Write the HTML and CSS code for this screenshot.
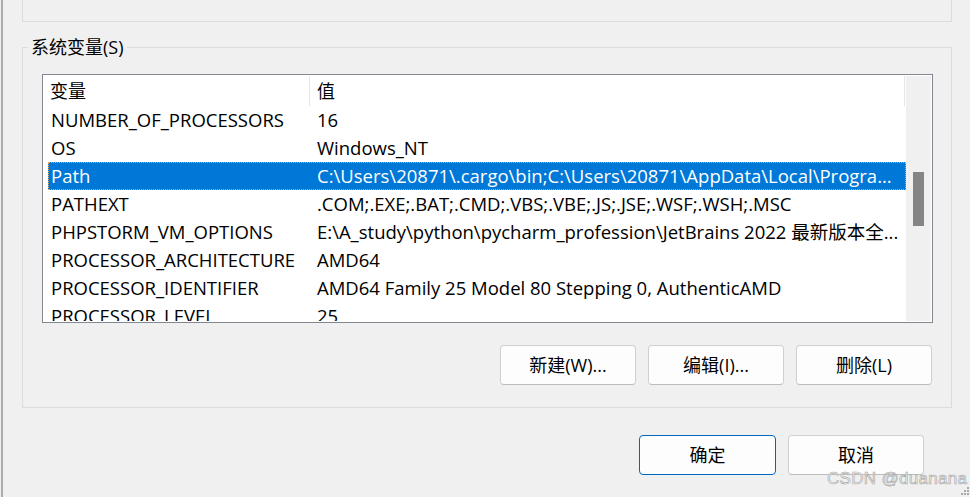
FILE: index.html
```html
<!DOCTYPE html>
<html lang="zh-CN">
<head>
<meta charset="utf-8">
<title>环境变量</title>
<link rel="stylesheet" href="styles.css">
</head>
<body>
<div class="window">
  <div class="group-top"></div>
  <fieldset class="group-sys">
    <legend class="group-label">系统变量(S)</legend>
    <div class="group-body">
      <div class="listbox">
        <div class="listview">
          <div class="header">
            <div class="hcell c1">变量</div>
            <div class="hcell c2">值</div>
          </div>
          <div class="row"><span class="cell c1">NUMBER_OF_PROCESSORS</span><span class="cell c2">16</span></div>
          <div class="row"><span class="cell c1">OS</span><span class="cell c2">Windows_NT</span></div>
          <div class="row selected"><span class="cell c1">Path</span><span class="cell c2">C:\Users\20871\.cargo\bin;C:\Users\20871\AppData\Local\Progra...</span></div>
          <div class="row"><span class="cell c1">PATHEXT</span><span class="cell c2">.COM;.EXE;.BAT;.CMD;.VBS;.VBE;.JS;.JSE;.WSF;.WSH;.MSC</span></div>
          <div class="row"><span class="cell c1">PHPSTORM_VM_OPTIONS</span><span class="cell c2">E:\A_study\python\pycharm_profession\JetBrains 2022 最新版本全...</span></div>
          <div class="row"><span class="cell c1">PROCESSOR_ARCHITECTURE</span><span class="cell c2">AMD64</span></div>
          <div class="row"><span class="cell c1">PROCESSOR_IDENTIFIER</span><span class="cell c2">AMD64 Family 25 Model 80 Stepping 0, AuthenticAMD</span></div>
          <div class="row"><span class="cell c1">PROCESSOR_LEVEL</span><span class="cell c2">25</span></div>
        </div>
        <div class="scrollbar"><div class="thumb"></div></div>
      </div>
      <div class="btn-row">
        <button class="btn">新建(W)...</button>
        <button class="btn">编辑(I)...</button>
        <button class="btn">删除(L)</button>
      </div>
    </div>
  </fieldset>
  <div class="dialog-actions">
    <button class="btn btn-default">确定</button>
    <button class="btn">取消</button>
  </div>
</div>
<div class="watermark">CSDN @duanana</div>
<svg class="grip" width="12" height="10" viewBox="0 0 12 10">
  <rect x="9" y="0" width="2" height="2"/>
  <rect x="6" y="3" width="2" height="2"/>
  <rect x="9" y="3" width="2" height="2"/>
  <rect x="3" y="6" width="2" height="2"/>
  <rect x="6" y="6" width="2" height="2"/>
  <rect x="9" y="6" width="2" height="2"/>
</svg>
</body>
</html>
```

FILE: styles.css
```css
html, body {
  margin: 0;
  padding: 0;
}

body {
  width: 970px;
  height: 497px;
  overflow: hidden;
  position: relative;
  background: #f0f0f0;
  color: #000;
  font-family: "Open Sans", "Noto Sans CJK SC", sans-serif;
  font-size: 18px;
}

.window {
  box-sizing: border-box;
  height: 497px;
  margin-left: 1px;
  border-left: 2px solid #ababab;
  padding-left: 19px;
}

.group-top {
  box-sizing: border-box;
  width: 930px;
  height: 22px;
  border: 1px solid #dcdcdc;
  border-top: none;
}

.group-sys {
  box-sizing: border-box;
  width: 930px;
  margin: 15px 0 0 0;
  padding: 0;
  border: 1px solid #dcdcdc;
  min-inline-size: 0;
}

.group-label {
  margin-left: 5px;
  padding: 0 3px;
  font-size: 18px;
  line-height: 20px;
}

.group-body {
  padding: 17px 0 22px 19px;
}

.listbox {
  box-sizing: border-box;
  width: 891px;
  height: 249px;
  border: 1px solid #828790;
  background: #fff;
  padding: 1px;
  display: flex;
}

.listview {
  width: 862px;
  overflow: hidden;
}

.header {
  display: flex;
  height: 30px;
}

.hcell {
  box-sizing: border-box;
  height: 30px;
  line-height: 30px;
  border-right: 1px solid #e5e5e5;
  white-space: nowrap;
}

.hcell.c1 {
  width: 266px;
  padding-left: 6px;
}

.hcell.c2 {
  width: 595px;
  padding-left: 7px;
}

.row {
  display: flex;
  height: 28px;
  line-height: 28px;
  margin-left: 4px;
  font-size: 18.5px;
  white-space: nowrap;
}

.row.selected {
  background: #0078d7;
  color: #fff;
  outline: 1px dotted #f0a050;
  outline-offset: -1px;
}

.cell {
  box-sizing: border-box;
  padding-left: 3px;
  overflow: hidden;
}

.cell.c1 {
  width: 266px;
  flex: none;
}

.cell.c2 {
  flex: 1;
}

.scrollbar {
  width: 25px;
  background: #f0f0f0;
  padding-top: 96px;
  box-sizing: border-box;
}

.thumb {
  width: 11px;
  height: 54px;
  margin-left: 7px;
  background: #858585;
}

.btn-row {
  display: flex;
  justify-content: flex-end;
  gap: 12px;
  width: 890px;
  margin-top: 22px;
}

.btn {
  box-sizing: border-box;
  width: 136px;
  height: 40px;
  padding: 0;
  border: 1px solid #d0d0d0;
  border-bottom-color: #bdbdbd;
  border-radius: 4px;
  background: #fdfdfd;
  color: #000;
  font-family: "Open Sans", "Noto Sans CJK SC", sans-serif;
  font-size: 18px;
  line-height: 20px;
}

.btn-default {
  width: 137px;
  border-color: #0067c0;
}

.dialog-actions {
  display: flex;
  justify-content: flex-end;
  gap: 12px;
  width: 902px;
  margin-top: 27px;
}

.watermark {
  position: absolute;
  left: 827px;
  top: 469px;
  font-family: "Liberation Sans", Arial, sans-serif;
  font-size: 17px;
  line-height: 20px;
  letter-spacing: 0.3px;
  color: #f2f2f2;
  -webkit-text-stroke: 0.6px #a6a6a6;
  white-space: nowrap;
}

.grip {
  position: absolute;
  right: 0;
  bottom: 0;
  fill: #a8a8a8;
}
```
